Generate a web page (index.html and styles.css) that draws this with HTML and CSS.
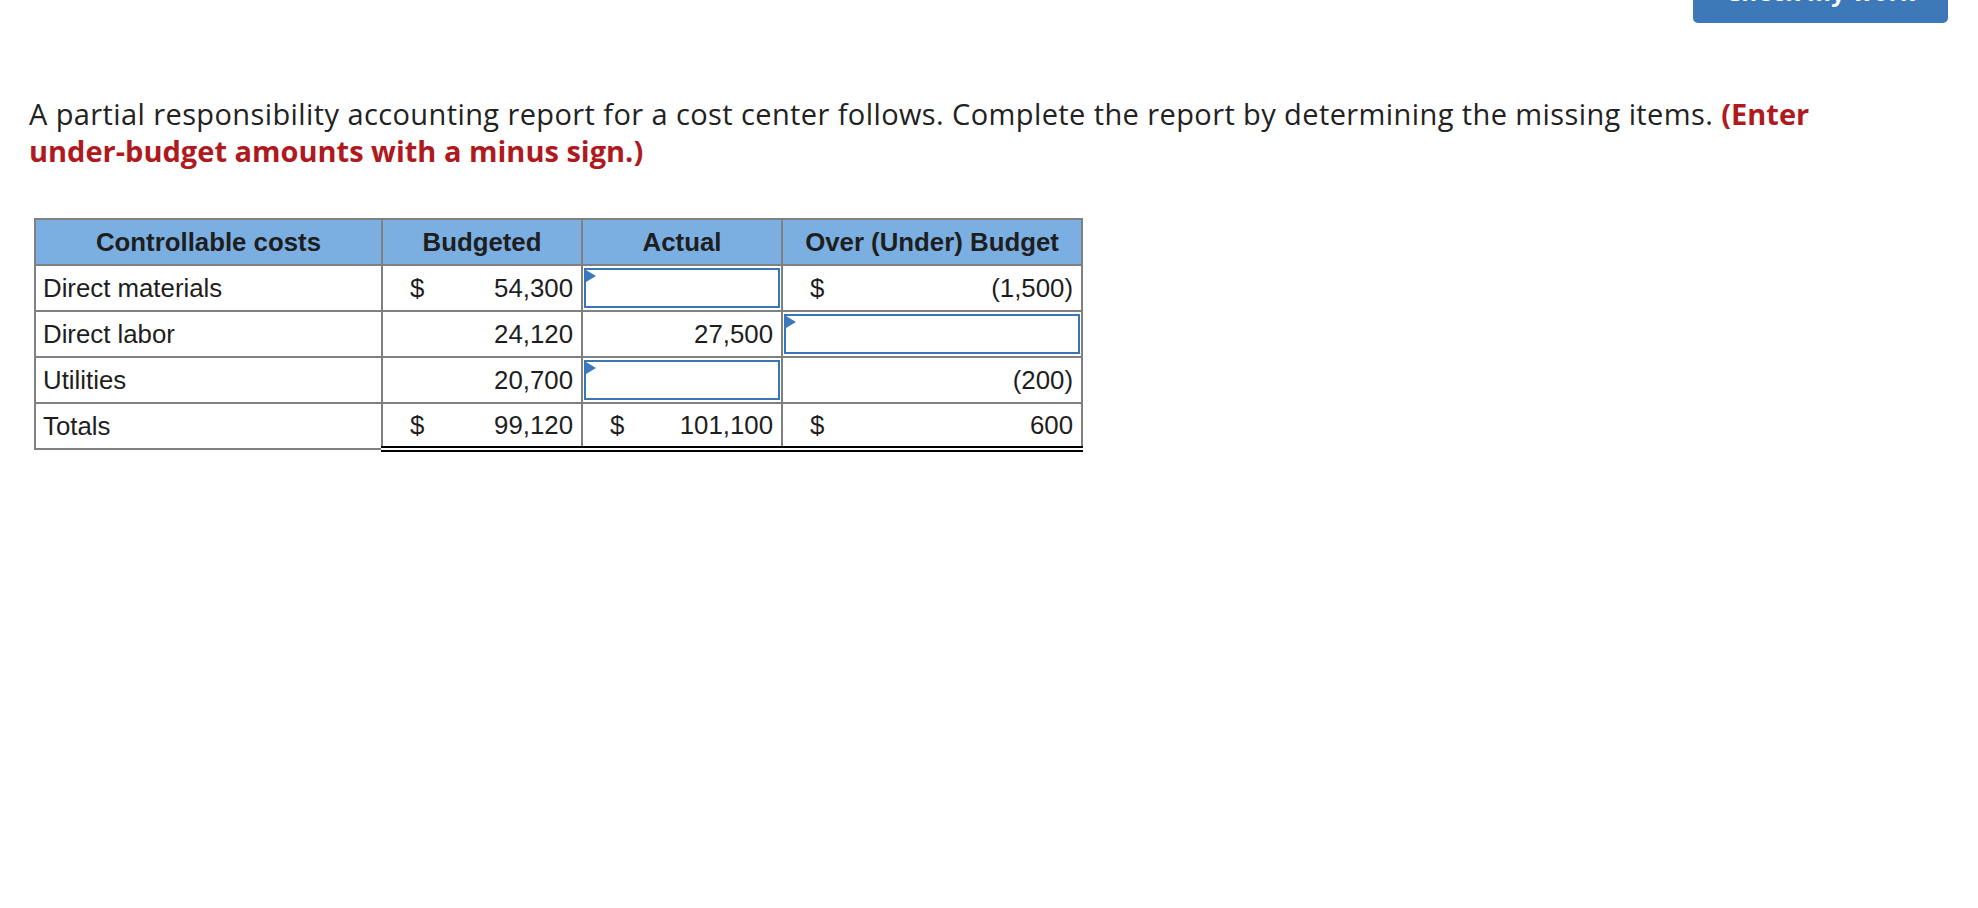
FILE: index.html
```html
<!DOCTYPE html>
<html lang="en">
<head>
<meta charset="utf-8">
<title>Responsibility accounting report</title>
<link rel="stylesheet" href="styles.css">
</head>
<body>
<div class="topbar">
  <button class="check-btn" type="button">Check my work</button>
</div>
<p class="prompt">A partial responsibility accounting report for a cost center follows. Complete the report by determining the missing items. <strong class="hint">(Enter under-budget amounts with a minus sign.)</strong></p>
<table class="report">
  <colgroup>
    <col class="c-name">
    <col class="c-num">
    <col class="c-num">
    <col class="c-over">
  </colgroup>
  <thead>
    <tr>
      <th>Controllable costs</th>
      <th>Budgeted</th>
      <th>Actual</th>
      <th>Over (Under) Budget</th>
    </tr>
  </thead>
  <tbody>
    <tr>
      <td class="name">Direct materials</td>
      <td><div class="amt"><span>$</span><span>54,300</span></div></td>
      <td class="in-cell"><div class="entry"><input type="text" aria-label="Direct materials actual"></div></td>
      <td><div class="amt"><span>$</span><span>(1,500)</span></div></td>
    </tr>
    <tr>
      <td class="name">Direct labor</td>
      <td><div class="amt"><span></span><span>24,120</span></div></td>
      <td><div class="amt"><span></span><span>27,500</span></div></td>
      <td class="in-cell"><div class="entry"><input type="text" aria-label="Direct labor over under"></div></td>
    </tr>
    <tr>
      <td class="name">Utilities</td>
      <td><div class="amt"><span></span><span>20,700</span></div></td>
      <td class="in-cell"><div class="entry"><input type="text" aria-label="Utilities actual"></div></td>
      <td><div class="amt"><span></span><span>(200)</span></div></td>
    </tr>
    <tr class="totals">
      <td class="name">Totals</td>
      <td class="sum"><div class="amt"><span>$</span><span>99,120</span></div></td>
      <td class="sum"><div class="amt"><span>$</span><span>101,100</span></div></td>
      <td class="sum-last"><div class="amt"><span>$</span><span>600</span></div></td>
    </tr>
  </tbody>
</table>
</body>
</html>
```

FILE: styles.css
```css
html, body {
  margin: 0;
  padding: 0;
  background: #ffffff;
}

body {
  font-family: "Open Sans", Lato, sans-serif;
  color: #222222;
}

.topbar {
  height: 23px;
  display: flex;
  justify-content: flex-end;
  padding-right: 30px;
}

.check-btn {
  width: 255px;
  height: 60px;
  margin-top: -37px;
  border: none;
  border-radius: 5px;
  background: #3d79b8;
  color: #ffffff;
  font-family: "Open Sans", sans-serif;
  font-weight: 700;
  font-size: 24px;
  letter-spacing: 0.5px;
  line-height: 24px;
  padding: 0 0 19px;
  display: flex;
  align-items: flex-end;
  justify-content: center;
}

.prompt {
  margin: 72px 0 0;
  padding: 0 29px;
  font-size: 29px;
  letter-spacing: 0.4px;
  line-height: 37px;
  color: #222222;
  max-width: 1800px;
}

.hint {
  color: #ae1a20;
  font-weight: 700;
  letter-spacing: 0;
}

.report {
  margin: 49px 0 0 34px;
  border-collapse: collapse;
  table-layout: fixed;
  width: 1047px;
  font-family: "Liberation Sans", Arial, sans-serif;
  font-size: 25.8px;
  color: #1e1e1e;
}

.c-name { width: 347px; }
.c-num { width: 200px; }
.c-over { width: 300px; }

.report th,
.report td {
  border: 2px solid #808080;
  height: 42px;
  padding: 0;
}

.report th {
  height: 44px;
  background: #7bafe2;
  font-weight: 700;
  text-align: center;
}

.report td.name {
  padding-left: 7px;
}

.amt {
  display: flex;
  justify-content: space-between;
  padding: 0 8px 0 27px;
}

.report td.in-cell {
  padding: 1px;
}

.entry {
  position: relative;
  height: 40px;
}

.entry::before {
  content: "";
  position: absolute;
  left: 2px;
  top: 2px;
  width: 0;
  height: 0;
  border-top: 6px solid transparent;
  border-bottom: 6px solid transparent;
  border-left: 10px solid #3b78bd;
}

.entry input {
  display: block;
  box-sizing: border-box;
  width: 100%;
  height: 100%;
  margin: 0;
  border: 2px solid #3a76b6;
  background: #ffffff;
  font: inherit;
  padding: 0 8px;
  text-align: right;
}

.totals td.sum {
  border-top: 2px solid #000000;
  border-bottom: 6px double #000000;
}

.totals td.sum-last {
  border-bottom: 6px double #000000;
}
```
